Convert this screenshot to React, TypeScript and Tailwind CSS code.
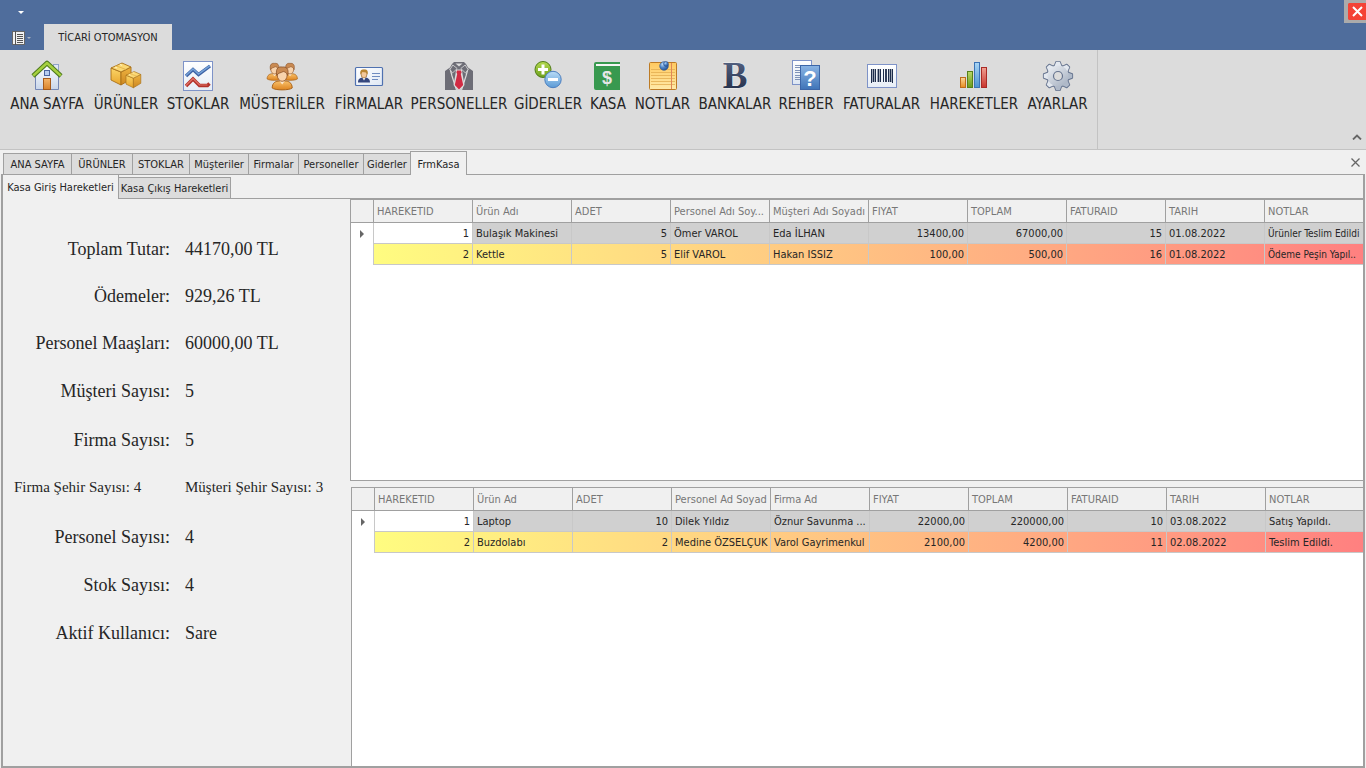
import React from "react";

const UI = "font-['DejaVu_Sans_Condensed','Noto_Sans',sans-serif]";
const SERIF = "font-['Liberation_Serif',serif]";

function Icon({ children }: { children: React.ReactNode }) {
  return (
    <svg width="32" height="32" viewBox="0 0 32 32" aria-hidden="true" className="shrink-0 overflow-visible">
      {children}
    </svg>
  );
}

function Gradient({ id, from, to, diagonal }: { id: string; from: string; to: string; diagonal?: boolean }) {
  return (
    <linearGradient id={id} x1="0" y1="0" x2={diagonal ? "1" : "0"} y2="1">
      <stop offset="0" stopColor={from} />
      <stop offset="1" stopColor={to} />
    </linearGradient>
  );
}

const HomeIcon = () => (
  <Icon>
    <defs>
      <Gradient id="wall" from="#ffffff" to="#c9d6ea" />
      <Gradient id="door" from="#f5b56a" to="#d9822b" />
    </defs>
    <rect x="22.500" y="4.500" width="5" height="10" fill="#dfe7f3" stroke="#8fa3c8" />
    <path d="M4.500 15 L16 4 L27.500 15 V29.500 H4.500 Z" fill="url(#wall)" stroke="#7487b5" />
    <rect x="13.500" y="10.500" width="5" height="5" fill="#b7cdf0" stroke="#4a64a0" />
    <rect x="12.500" y="18.500" width="7" height="11" fill="url(#door)" stroke="#a55a1c" />
    <path d="M2 16 L16 3 L30 16" fill="none" stroke="#4e7a1e" strokeWidth="4.600" strokeLinejoin="round" />
    <path d="M2.300 15.600 L16 3 L29.700 15.600" fill="none" stroke="#a5d03f" strokeWidth="2.600" strokeLinejoin="round" />
  </Icon>
);

const Box = ({ x, y, s }: { x: number; y: number; s: number }) => (
  <g transform={`translate(${x} ${y}) scale(${s})`} stroke="#a8711a" strokeWidth="0.9" strokeLinejoin="round">
    <path d="M0 5 L10 9 V22 L0 17 Z" fill="url(#boxLeft)" />
    <path d="M10 9 L20 4 V16 L10 22 Z" fill="url(#boxRight)" />
    <path d="M0 5 L11 0 L20 4 L10 9 Z" fill="#fbd873" />
    <path d="M5 2.800 L15 6.500" stroke="#e0ae45" strokeWidth="0.800" fill="none" />
    <path d="M9 1.200 L11 2.500 M4 4 L6 5" stroke="#fff0b5" strokeWidth="1.200" />
  </g>
);

const BoxesIcon = () => (
  <Icon>
    <defs>
      <Gradient id="boxLeft" from="#fbd568" to="#e8a52c" />
      <Gradient id="boxRight" from="#efb541" to="#cc8620" />
    </defs>
    <Box x={1} y={3} s={1} />
    <Box x={16} y={11.5} s={0.74} />
  </Icon>
);

const ChartIcon = () => (
  <Icon>
    <defs>
      <Gradient id="sheet" from="#ffffff" to="#e6edf6" />
    </defs>
    <rect x="1.500" y="1.500" width="29" height="29" fill="url(#sheet)" stroke="#7e93c8" />
    <path d="M4 16 L11 9.500 L16.500 14.500 L28 6" fill="none" stroke="#3e62a5" strokeWidth="3.400" />
    <path d="M4 15.600 L11 9 L16.500 14 L28 5.600" fill="none" stroke="#76a3d8" strokeWidth="1.400" />
    <path d="M4 26 L11 19 L17.500 25.500 H25.500 L27.500 23.500" fill="none" stroke="#b3322b" strokeWidth="3.400" />
    <path d="M4 25.500 L11 18.500 L17.500 25 H25.500" fill="none" stroke="#e07468" strokeWidth="1.200" />
  </Icon>
);

const Person = ({ x, y }: { x: number; y: number }) => (
  <g transform={`translate(${x} ${y})`}>
    <path d="M-10 19.500 C-10 14 -6 12.500 -3 12.500 H3 C6 12.500 10 14 10 19.500 C7 22 -7 22 -10 19.500 Z" fill="url(#body)" stroke="#a9641b" />
    <path d="M-3 12 L0 16 L3 12 Z" fill="#fbe7cd" />
    <ellipse cx="0" cy="6.500" rx="5" ry="6.300" fill="#f8d3ac" stroke="#9a5a2a" strokeWidth="0.900" />
    <path d="M-5.500 7 C-7 -1 -3 -2 0 -1.500 C4 -2 7 0 5.500 7 C4.500 4 3 3.500 1 3 C-1 4.500 -4 4 -5.500 7 Z" fill="#c98a52" stroke="#8a5228" strokeWidth="0.800" />
  </g>
);

const PeopleIcon = () => (
  <Icon>
    <defs>
      <Gradient id="body" from="#f8c06a" to="#de8420" />
    </defs>
    <g transform="translate(8.500 4.500) scale(0.740)"><Person x={0} y={0} /></g>
    <g transform="translate(24 4.500) scale(0.740)"><Person x={0} y={0} /></g>
    <Person x={16.2} y={8.5} />
  </Icon>
);

const CardIcon = () => (
  <Icon>
    <defs>
      <Gradient id="card" from="#ffffff" to="#dfe8f4" diagonal />
    </defs>
    <rect x="2.500" y="7.500" width="27" height="18" rx="1" fill="url(#card)" stroke="#4f71b0" strokeWidth="1.200" />
    <path d="M5 22.500 C5 18.500 7.500 18 9 17.500 H13 C15 18 17 19 17 22.500 Z" fill="#35477d" />
    <path d="M9 17 L11 20.500 L13 17 Z" fill="#fff" />
    <ellipse cx="11" cy="14" rx="3" ry="4" fill="#f3c99b" stroke="#8a5b20" strokeWidth="0.600" />
    <path d="M7.500 14.500 C6.500 10 9 9 11 9.500 C14 9 15.500 11 14.500 14.500 L13 12.500 L9.500 12 Z" fill="#b98632" />
    <path d="M19 13.500 H27 M19 16.500 H27 M19 19.500 H25" stroke="#6f8cc0" />
  </Icon>
);

const TieIcon = () => (
  <Icon>
    <path d="M9 4 L11 2 H21 L23 4 L25 7.500 L30 11 V30 H2 V11 L7 7.500 Z" fill="#6d6d76" />
    <path d="M12.500 3.500 L16 6.500 L19.500 3.500 Z" fill="#dcdcdc" />
    <path d="M7 8.500 L9 16 L13.500 30 M25 8.500 L23 16 L18.500 30" fill="none" stroke="#dcdcdc" strokeWidth="1.200" />
    <path d="M9.800 5 L7 9.500 L9.500 13 L14.200 8.500 Z M22.200 5 L25 9.500 L22.500 13 L17.800 8.500 Z" fill="#6d6d76" stroke="#dcdcdc" strokeWidth="0.800" />
    <path d="M13 9.500 H19 L19.500 14 L21.500 25 L16.800 31 H15.200 L10.500 25 L12.500 14 Z" fill="#dcdcdc" />
    <path d="M14 10.500 H18 L18.600 12.500 L17.800 14 L20.200 25 L16 29.500 L11.800 25 L14.200 14 L13.400 12.500 Z" fill="#d12b44" />
  </Icon>
);

const PlusMinusIcon = () => (
  <Icon>
    <defs>
      <Gradient id="plus" from="#b5da50" to="#6c9f1d" />
      <Gradient id="minus" from="#b9dcf7" to="#5b9ad5" />
    </defs>
    <circle cx="11" cy="9.500" r="8" fill="url(#plus)" stroke="#507c18" />
    <path d="M11 4.500 V14.500 M6 9.500 H16" stroke="#fff" strokeWidth="3" />
    <circle cx="21" cy="19.500" r="8.200" fill="url(#minus)" stroke="#4c7fc0" />
    <path d="M16 19.500 H26" stroke="#fff" strokeWidth="3" />
  </Icon>
);

const CashIcon = () => (
  <Icon>
    <path d="M2 4 Q2 2 4 2 H28 V4 H4 V6 H28 V30 H4 Q2 30 2 28 Z" fill="#38994f" />
    <rect x="4" y="4" width="24" height="2" fill="#f5f5f5" />
    <text x="15" y="24" textAnchor="middle" fontFamily="Liberation Sans" fontWeight="700" fontSize="18" fill="#e6e6e6">$</text>
  </Icon>
);

const NoteIcon = () => (
  <Icon>
    <defs>
      <Gradient id="note" from="#ffc95f" to="#ffeaa9" />
      <radialGradient id="pin" cx="0.350" cy="0.300" r="0.800">
        <stop offset="0" stopColor="#b8d8f8" />
        <stop offset="0.500" stopColor="#4b82c4" />
        <stop offset="1" stopColor="#234b8c" />
      </radialGradient>
    </defs>
    <rect x="2.500" y="2.500" width="27" height="27" rx="1" fill="url(#note)" stroke="#bd7b25" />
    <path d="M4 9.500 H28 M4 12.500 H28 M4 15.500 H28 M4 18.500 H28 M4 21.500 H28 M4 24.500 H28" stroke="#e3ad50" strokeWidth="0.800" />
    <path d="M24.500 3 V29" stroke="#e0865a" />
    <circle cx="17" cy="6" r="4.300" fill="url(#pin)" stroke="#2c4f8c" strokeWidth="0.600" />
    <circle cx="19" cy="4" r="2.400" fill="url(#pin)" stroke="#2c4f8c" strokeWidth="0.600" />
  </Icon>
);

const BoldIcon = () => (
  <Icon>
    <defs>
      <Gradient id="bold" from="#5d6b8c" to="#1c2740" />
    </defs>
    <text x="16" y="28" textAnchor="middle" fontFamily="Liberation Serif" fontWeight="700" fontSize="37" fill="url(#bold)" stroke="#f0f0f0" strokeWidth="1" paintOrder="stroke">B</text>
  </Icon>
);

const HelpIcon = () => (
  <Icon>
    <defs>
      <Gradient id="help" from="#8ab4e4" to="#3f74b8" />
      <Gradient id="page" from="#ffffff" to="#dde6f2" />
    </defs>
    <rect x="2.500" y="0.500" width="19" height="24" fill="url(#page)" stroke="#7e93c8" />
    <path d="M5 5.500 H17 M5 7.500 H14 M5 10.500 H12 M5 12.500 H10 M5 15.500 H10 M5 17.500 H10 M5 19.500 H10" stroke="#8093b8" />
    <rect x="10.500" y="5.500" width="19" height="24" fill="url(#help)" stroke="#3c66a8" />
    <text x="20" y="26" textAnchor="middle" fontFamily="Liberation Sans" fontWeight="700" fontSize="22" fill="#fff">?</text>
  </Icon>
);

const BarcodeIcon = () => (
  <Icon>
    <rect x="1.500" y="4.500" width="29" height="23" fill="url(#sheet)" stroke="#7e93c8" />
    <path d="M5.500 9 V23 M9.500 9 V22 M14.500 9 V22 M17.500 9 V22 M22.500 9 V22 M26.500 9 V23" stroke="#1e2d4a" />
    <path d="M7.500 9 V22 M12.500 9 V22 M20 9 V22 M24.500 9 V22" stroke="#1e2d4a" strokeWidth="1.800" />
  </Icon>
);

const BarsIcon = () => (
  <Icon>
    <defs>
      <Gradient id="bar1" from="#fbd79b" to="#e88c1d" />
      <Gradient id="bar2" from="#b9d766" to="#6b9a1d" />
      <Gradient id="bar3" from="#a9d6f5" to="#4e93d0" />
      <Gradient id="bar4" from="#f0a193" to="#c8342c" />
    </defs>
    <rect x="2.500" y="17.500" width="5" height="10" fill="url(#bar1)" stroke="#bd6c1c" />
    <rect x="9.500" y="11.500" width="5" height="16" fill="url(#bar2)" stroke="#56801a" />
    <rect x="16.500" y="2.500" width="5" height="25" fill="url(#bar3)" stroke="#3b73b5" />
    <rect x="23.500" y="7.500" width="5" height="20" fill="url(#bar4)" stroke="#a92b26" />
  </Icon>
);

const TEETH = [0, 45, 90, 135, 180, 225, 270, 315];

const GearIcon = () => (
  <Icon>
    <defs>
      <linearGradient id="gear" gradientUnits="userSpaceOnUse" x1="5" y1="2" x2="27" y2="30">
        <stop offset="0" stopColor="#f6f8fb" />
        <stop offset="1" stopColor="#9aa6b8" />
      </linearGradient>
    </defs>
    <g stroke="#66748f" strokeWidth="1.800" fill="#66748f" strokeLinejoin="round">
      {TEETH.map((a) => (
        <path key={a} transform={`rotate(${a} 16 16)`} d="M12.200 7 L14.200 1.800 H17.800 L19.800 7 Z" />
      ))}
      <circle cx="16" cy="16" r="10.600" />
    </g>
    <g fill="url(#gear)">
      {TEETH.map((a) => (
        <path key={a} transform={`rotate(${a} 16 16)`} d="M12.200 7 L14.200 1.800 H17.800 L19.800 7 Z" fill={a > 60 && a < 200 ? "#b0bac9" : "#e3e8ef"} />
      ))}
      <circle cx="16" cy="16" r="10.600" />
    </g>
    <circle cx="16" cy="16" r="4.500" fill="#dcdcdc" stroke="#66748f" strokeWidth="1.200" />
  </Icon>
);

const RIBBON = [
  { label: "ANA SAYFA", width: "w-[86px]", icon: <HomeIcon /> },
  { label: "ÜRÜNLER", width: "w-[72px]", icon: <BoxesIcon /> },
  { label: "STOKLAR", width: "w-[72px]", icon: <ChartIcon /> },
  { label: "MÜSTERİLER", width: "w-[96px]", icon: <PeopleIcon /> },
  { label: "FİRMALAR", width: "w-[78px]", icon: <CardIcon /> },
  { label: "PERSONELLER", width: "w-[102px]", icon: <TieIcon /> },
  { label: "GİDERLER", width: "w-[76px]", icon: <PlusMinusIcon /> },
  { label: "KASA", width: "w-[44px]", icon: <CashIcon /> },
  { label: "NOTLAR", width: "w-[65px]", icon: <NoteIcon /> },
  { label: "BANKALAR", width: "w-[80px]", icon: <BoldIcon /> },
  { label: "REHBER", width: "w-[62px]", icon: <HelpIcon /> },
  { label: "FATURALAR", width: "w-[89px]", icon: <BarcodeIcon /> },
  { label: "HAREKETLER", width: "w-[96px]", icon: <BarsIcon /> },
  { label: "AYARLAR", width: "w-[71px]", icon: <GearIcon /> },
];

const DOC_TABS = [
  { label: "ANA SAYFA", width: "w-[69px]" },
  { label: "ÜRÜNLER", width: "w-[62px]" },
  { label: "STOKLAR", width: "w-[58px]" },
  { label: "Müşteriler", width: "w-[60px]" },
  { label: "Firmalar", width: "w-[51px]" },
  { label: "Personeller", width: "w-[66px]" },
  { label: "Giderler", width: "w-[48px]" },
];

function Header() {
  return (
    <header className="flex h-[50px] justify-between bg-[#4f6d9c]">
      <div className="flex flex-col">
        <button aria-label="Hızlı erişim" className="flex h-6 w-[42px] items-center justify-center">
          <svg width="6" height="3" viewBox="0 0 6 3"><path d="M0 0 H6 L3 3 Z" fill="#fff" /></svg>
        </button>
        <div className="flex h-[26px]">
          <button aria-label="Menü" className="flex w-11 items-center gap-0.5 pl-3 pt-0.5">
            <svg width="13" height="14" viewBox="0 0 13 14">
              <rect x="0.500" y="0.500" width="12" height="13" fill="#f2f2f2" stroke="#666" />
              <path d="M3.500 0 V14" stroke="#555" />
              <path d="M5 3.500 H11 M5 5.500 H11 M5 7.500 H11 M5 9.500 H11 M5 11.500 H11" stroke="#555" />
            </svg>
            <svg width="4" height="2" viewBox="0 0 4 2"><path d="M0 0 H4 L2 2 Z" fill="#a8b2c0" /></svg>
          </button>
          <button className="w-32 bg-[#dcdcdc] pt-0.5 text-[11px] text-[#262626]">TİCARİ OTOMASYON</button>
        </div>
      </div>
      <button aria-label="Kapat" className="flex h-[23px] w-[22px] items-center justify-end bg-[#ababab]">
        <svg width="18" height="17" viewBox="0 0 18 17">
          <path d="M1 0 H18 V17 H1 L0 16 V1 Z" fill="#f44336" />
          <path d="M5 4 L14 13 M14 4 L5 13" stroke="#fff" strokeWidth="2" />
        </svg>
      </button>
    </header>
  );
}

function Ribbon() {
  return (
    <nav className="flex h-[100px] justify-between border-b border-[#c3c3c3] bg-[#dcdcdc]">
      <div className="flex items-start border-r border-[#c3c3c3] px-1">
        {RIBBON.map((item) => (
          <button key={item.label} className={`${item.width} flex shrink-0 flex-col items-center pt-[10px] text-[15px] leading-6 text-[#262626] whitespace-nowrap`}>
            {item.icon}
            {item.label}
          </button>
        ))}
      </div>
      <button aria-label="Şeridi daralt" className="self-end p-1 pb-[9px]">
        <svg width="10" height="6" viewBox="0 0 10 6"><path d="M1 5.500 L5 1.500 L9 5.500" fill="none" stroke="#666" strokeWidth="1.800" /></svg>
      </button>
    </nav>
  );
}

const tabText = "pt-0.5 text-[11px] leading-4 text-[#262626] whitespace-nowrap";

function DocumentTabs() {
  return (
    <div className="flex h-[25px] items-end justify-between">
      <div role="tablist" className="flex items-end self-stretch border-b border-[#a0a0a0] pl-[2px]">
        {DOC_TABS.map((tab) => (
          <button key={tab.label} role="tab" aria-selected="false" className={`${tab.width} ${tabText} -mr-px h-[21px] border border-b-0 border-[#a0a0a0] bg-[#dcdcdc]`}>
            {tab.label}
          </button>
        ))}
      </div>
      <button role="tab" aria-selected="true" className={`${tabText} h-6 w-[57px] shrink-0 border border-b-0 border-[#a0a0a0] bg-[#f0f0f0]`}>
        FrmKasa
      </button>
      <div className="flex grow items-center justify-end self-stretch border-b border-[#a0a0a0] pr-[5px]">
        <button aria-label="Sekmeyi kapat">
          <svg width="9" height="9" viewBox="0 0 9 9"><path d="M0.500 0.500 L8.500 8.500 M8.500 0.500 L0.500 8.500" stroke="#666" strokeWidth="1.300" /></svg>
        </button>
      </div>
    </div>
  );
}

function Stat({ label, value, height }: { label: string; value: string; height: string }) {
  return (
    <div className={`${height} flex items-center gap-[15px] text-[18px]`}>
      <dt className="w-[167px] text-right">{label}</dt>
      <dd>{value}</dd>
    </div>
  );
}

function Summary() {
  return (
    <dl className={`${SERIF} w-[347px] shrink-0 pt-[26px] leading-6 text-[#262626] whitespace-nowrap`}>
      <Stat height="h-[47px]" label="Toplam Tutar:" value="44170,00 TL" />
      <Stat height="h-[47px]" label="Ödemeler:" value="929,26 TL" />
      <Stat height="h-[47px]" label="Personel Maaşları:" value="60000,00 TL" />
      <Stat height="h-[49px]" label="Müşteri Sayısı:" value="5" />
      <Stat height="h-[49px]" label="Firma Sayısı:" value="5" />
      <div className="flex h-[49px] items-center pb-1 text-[15px]">
        <div className="flex w-[182px] gap-1 pl-[11px]"><dt>Firma Şehir Sayısı:</dt><dd>4</dd></div>
        <div className="flex gap-1"><dt>Müşteri Şehir Sayısı:</dt><dd>3</dd></div>
      </div>
      <Stat height="h-12" label="Personel Sayısı:" value="4" />
      <Stat height="h-12" label="Stok Sayısı:" value="4" />
      <Stat height="h-12" label="Aktif Kullanıcı:" value="Sare" />
    </dl>
  );
}

const NUMERIC = [0, 2, 5, 6, 7];
const LONG_TEXT = 18;

function Grid({ columns, rows, label }: { columns: string[]; rows: string[][]; label: string }) {
  return (
    <table aria-label={label} className="w-full table-fixed border-separate border-spacing-0 text-[11px] leading-4 text-[#262626]">
      <thead>
        <tr className="h-[23px] bg-[#f0f0f0]">
          <th className="w-[23px] border-b border-r border-[#a0a0a0] p-0" aria-label="Satır" />
          {columns.map((c) => (
            <th key={c} className="w-[99px] overflow-hidden whitespace-nowrap border-b border-r border-[#a0a0a0] px-[3px] pb-0 pt-0.5 text-left font-normal text-[#777] last:w-auto last:border-r-0">{c}</th>
          ))}
        </tr>
      </thead>
      <tbody>
        {rows.map((row, r) => (
          <tr key={row[0]} className={r === 0 ? "h-[21px] bg-[#d0d0d0]" : "h-[21px] bg-linear-to-r from-[#ffff80] to-[#ff8080]"}>
            <td className="border-r border-[#c8c8c8] bg-white p-0">
              {r === 0 && (
                <svg width="4" height="8" viewBox="0 0 4 8" className="mx-auto block"><path d="M0 0 L4 4 L0 8 Z" fill="#666" /></svg>
              )}
            </td>
            {row.map((cell, i) => (
              <td key={i} className={`overflow-hidden whitespace-nowrap border-b border-r border-[#c8c8c8] pb-0 pl-[3px] pr-[3px] pt-0.5 last:border-r-0 last:pr-0 ${NUMERIC.includes(i) ? "text-right" : "text-left"} ${r === 0 && i === 0 ? "bg-white" : ""} ${cell.length > LONG_TEXT ? "text-[10px]" : ""}`}>
                {cell}
              </td>
            ))}
          </tr>
        ))}
      </tbody>
    </table>
  );
}

export default function App() {
  return (
    <div className={`${UI} flex min-h-screen flex-col bg-[#f0f0f0]`}>
      <Header />
      <Ribbon />
      <main className="flex grow flex-col px-px pb-px">
        <DocumentTabs />
        <section className="flex grow flex-col border-x-2 border-b-2 border-[#a0a0a0]">
          <div role="tablist" className="flex h-6 items-end">
            <button role="tab" aria-selected="true" className={`${tabText} h-6 w-[116px] shrink-0 border-r border-[#a0a0a0]`}>Kasa Giriş Hareketleri</button>
            <button role="tab" aria-selected="false" className={`${tabText} h-[22px] w-[112px] shrink-0 border border-l-0 border-[#a0a0a0] bg-[#dcdcdc]`}>Kasa Çıkış Hareketleri</button>
            <div className="grow self-stretch border-b border-[#a0a0a0]" />
          </div>
          <div className="flex grow">
            <Summary />
            <div className="flex min-w-0 grow flex-col gap-[6px]">
              <div className="grow basis-[282px] border border-r-0 border-[#a0a0a0] bg-white">
                <Grid
                  label="Müşteri hareketleri"
                  columns={["HAREKETID", "Ürün Adı", "ADET", "Personel Adı Soy...", "Müşteri Adı Soyadı", "FIYAT", "TOPLAM", "FATURAID", "TARIH", "NOTLAR"]}
                  rows={[
                    ["1", "Bulaşık Makinesi", "5", "Ömer VAROL", "Eda İLHAN", "13400,00", "67000,00", "15", "01.08.2022", "Ürünler Teslim Edildi"],
                    ["2", "Kettle", "5", "Elif VAROL", "Hakan ISSIZ", "100,00", "500,00", "16", "01.08.2022", "Ödeme Peşin Yapıl.."],
                  ]}
                />
              </div>
              <div className="ml-px grow basis-[279px] border border-b-0 border-r-0 border-[#a0a0a0] bg-white">
                <Grid
                  label="Firma hareketleri"
                  columns={["HAREKETID", "Ürün Ad", "ADET", "Personel Ad Soyad", "Firma Ad", "FIYAT", "TOPLAM", "FATURAID", "TARIH", "NOTLAR"]}
                  rows={[
                    ["1", "Laptop", "10", "Dilek Yıldız", "Öznur Savunma ...", "22000,00", "220000,00", "10", "03.08.2022", "Satış Yapıldı."],
                    ["2", "Buzdolabı", "2", "Medine ÖZSELÇUK", "Varol Gayrimenkul", "2100,00", "4200,00", "11", "02.08.2022", "Teslim Edildi."],
                  ]}
                />
              </div>
            </div>
          </div>
        </section>
      </main>
    </div>
  );
}
